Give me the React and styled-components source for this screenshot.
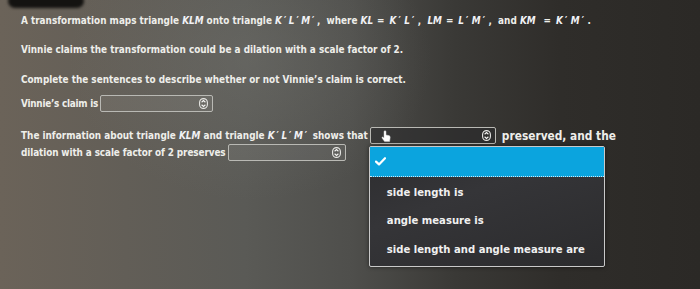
import React from "react";
import styled, { createGlobalStyle } from "styled-components";

const Global = createGlobalStyle`
  html, body { margin: 0; padding: 0; }
  body { width: 700px; height: 289px; overflow: hidden; }
`;

const Page = styled.div`
  position: relative;
  width: 700px;
  height: 289px;
  overflow: hidden;
  box-sizing: border-box;
  padding: 13px 0 0 21px;
  background:
    radial-gradient(ellipse 260px 200px at 250px 60px, rgba(120,120,115,0.35), rgba(0,0,0,0) 70%),
    linear-gradient(90deg, #6b6359 0%, #625e57 18%, #5a5a56 35%, #4f4f4c 50%, #3a3936 65%, #2f2d2a 80%, #2b2926 100%);
  font-family: "DejaVu Sans", Verdana, sans-serif;
  font-stretch: condensed;
  font-weight: bold;
  font-size: 9.9px;
  color: #eeeeea;
  display: flex;
  flex-direction: column;
`;

const Bezel = styled.div`
  position: absolute;
  left: 8px;
  top: -6px;
  width: 76px;
  height: 14px;
  border-radius: 8px;
  background: #141311;
  filter: blur(1.5px);
`;

const Line = styled.div`
  display: flex;
  align-items: center;
  white-space: pre;
  height: ${(p) => p.$h || 14}px;
  margin-top: ${(p) => p.$mt || 0}px;
  letter-spacing: ${(p) => p.$ls || 0}px;
`;

const M = styled.i`
  font-style: italic;
  font-weight: bold;
  color: #f2f2f6;
`;

const P = styled.span`
  margin: 0 ${(p) => p.$r}px 0 2px;
  font-style: normal;
`;

const Eq = styled.span`
  margin: 0 ${(p) => p.$r || 5}px 0 ${(p) => p.$l || 4}px;
`;

const Big = styled.span`
  font-size: 11.8px;
  margin-left: 6px;
  letter-spacing: 0;
`;

const SelectBox = styled.div`
  position: relative;
  box-sizing: border-box;
  width: ${(p) => p.$w}px;
  height: 17px;
  margin-left: ${(p) => p.$ml ?? 3}px;
  border: 1px solid #b9b9b4;
  border-radius: 2px;
  background: ${(p) => p.$bg || "rgba(255,255,255,0.06)"};
  display: flex;
  align-items: center;
  justify-content: flex-end;
  padding-right: 4px;
`;

const Chev = () => (
  <svg width="9" height="11" viewBox="0 0 9 11">
    <rect x="0.6" y="0.6" width="7.8" height="9.8" rx="3.9" fill="none" stroke="#e9e9e6" strokeWidth="1.1" />
    <path d="M2.6 4.2 L4.5 2.6 L6.4 4.2 M2.6 6.8 L4.5 8.4 L6.4 6.8" fill="none" stroke="#f4f4f2" strokeWidth="1.2" />
  </svg>
);

const Hand = styled.svg`
  position: absolute;
  left: 10px;
  top: 2px;
`;

const Wrap = styled.div`
  position: relative;
  display: flex;
  letter-spacing: 0;
`;

const Menu = styled.div`
  position: absolute;
  left: 1px;
  top: 19px;
  width: 236px;
  height: 121px;
  box-sizing: border-box;
  border: 1.5px solid #c9c9c9;
  border-radius: 2px;
  background: linear-gradient(160deg, #2d2d2f 0%, #353538 40%, #2b2b2d 100%);
  box-shadow: 0 0 4px rgba(0,0,0,0.5);
  z-index: 5;
  font-size: 11.2px;
  color: #f0f0f0;
  display: flex;
  flex-direction: column;
`;

const Selected = styled.div`
  height: 29px;
  background: #0ba4de;
  border-bottom: 1px dotted #cfe8f3;
  display: flex;
  align-items: center;
  padding-left: 5px;
`;

const Option = styled.div`
  height: 28px;
  display: flex;
  align-items: center;
  padding-left: 17px;
  margin-top: ${(p) => p.$mt || 0}px;
`;

const Check = () => (
  <svg width="11" height="9" viewBox="0 0 11 9">
    <path d="M1 4.6 L4 7.4 L10 1.2" fill="none" stroke="#ffffff" strokeWidth="2.2" strokeLinecap="round" strokeLinejoin="round" />
  </svg>
);

const Pr = ({ v, r = 3.5 }) => (
  <M>
    {v.split("").map((c, i) => (
      <React.Fragment key={i}>
        {c}
        <P $r={r}>′</P>
      </React.Fragment>
    ))}
  </M>
);

export default function App() {
  return (
    <>
      <Global />
      <Page>
        <Bezel />
        <Line>
          A transformation maps triangle <M>KLM</M> onto triangle <Pr v="KLM" r={2.5} />,  where <M>KL</M><Eq>=</Eq><Pr v="KL" />,  <M>LM</M><Eq>=</Eq><Pr v="LM" />,  and <M>KM</M><Eq $l={8}>=</Eq><Pr v="KM" />.
        </Line>
        <Line $mt={15}>Vinnie claims the transformation could be a dilation with a scale factor of 2.</Line>
        <Line $mt={16}>Complete the sentences to describe whether or not Vinnie’s claim is correct.</Line>
        <Line $mt={8} $h={18} $ls={-0.25}>
          Vinnie’s claim is
          <SelectBox $w={113} $ml={2}>
            <Chev />
          </SelectBox>
        </Line>
        <Line $mt={15} $h={17}>
          The information about triangle <M>KLM</M> and triangle <Pr v="KLM" r={2.5} /> shows that
          <Wrap>
            <SelectBox $w={126} $ml={2} $bg="rgba(40,40,42,0.55)">
              <Hand width="10" height="13" viewBox="0 0 10 13">
                <path d="M3 1.2 Q4 0.2 5 1.2 L5 5 L8 5.6 Q9.4 6 9.2 7.6 L8.6 11.6 L3.6 11.6 L1 8 Q0.6 6.8 1.8 7 L3 8 Z" fill="#ffffff" stroke="#cfcfcf" strokeWidth="0.5" />
              </Hand>
              <Chev />
            </SelectBox>
            <Menu>
              <Selected>
                <Check />
              </Selected>
              <Option $mt={1}>side length is</Option>
              <Option>angle measure is</Option>
              <Option $mt={1}>side length and angle measure are</Option>
            </Menu>
          </Wrap>
          <Big>preserved, and the</Big>
        </Line>
        <Line $h={17} $ls={-0.1}>
          dilation with a scale factor of 2 preserves
          <SelectBox $w={118} $ml={2}>
            <Chev />
          </SelectBox>
        </Line>
      </Page>
    </>
  );
}
